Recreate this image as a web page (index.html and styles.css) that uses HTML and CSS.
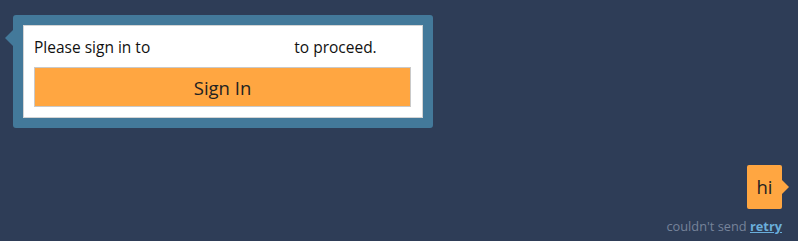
FILE: index.html
```html
<!DOCTYPE html>
<html>
<head>
<meta charset="utf-8">
<link rel="stylesheet" href="styles.css">
</head>
<body>
<div class="page">
  <div class="card">
    <div class="inner">
      <div class="msg">Please sign in to <span class="app"></span> to proceed.</div>
      <button class="signin">Sign In</button>
    </div>
  </div>
  <div class="chat">
    <div class="bubble">hi</div>
    <div class="status">couldn't send <a class="retry" href="#">retry</a></div>
  </div>
</div>
</body>
</html>
```
FILE: styles.css
```css
html, body {
  margin: 0;
  padding: 0;
  background: #2e3d57;
  width: 798px;
  height: 241px;
  overflow: hidden;
  font-family: "Open Sans", "Noto Sans", sans-serif;
}
.page {
  display: flex;
  flex-direction: column;
  padding: 15px 0 0 13px;
}
.card {
  position: relative;
  width: 400px;
  padding: 10px;
  background: #43799a;
  border-radius: 3px;
}
.card::before {
  content: "";
  position: absolute;
  left: -8px;
  top: 15px;
  border-top: 8px solid transparent;
  border-bottom: 8px solid transparent;
  border-right: 8px solid #43799a;
}
.inner {
  background: #fff;
  border: 1px solid #d4d4d4;
  padding: 11px 11px 10px 10px;
  box-sizing: border-box;
  height: 93px;
}
.msg {
  font-size: 15.5px;
  line-height: 20px;
  color: #111;
  white-space: nowrap;
}
.app {
  display: inline-block;
  width: 136px;
}
.signin {
  display: block;
  margin-top: 10px;
  width: 377px;
  height: 40px;
  background: #ffa641;
  border: 1px solid #c9c9c9;
  font-family: inherit;
  font-size: 18.5px;
  color: #222;
  padding: 0;
}
.chat {
  display: flex;
  flex-direction: column;
  align-items: flex-end;
  margin-top: 37px;
  padding-right: 16px;
}
.bubble {
  position: relative;
  width: 35px;
  height: 44px;
  background: #ffa641;
  border-radius: 2px;
  font-size: 18.5px;
  line-height: 44px;
  text-align: center;
  color: #222;
}
.bubble::after {
  content: "";
  position: absolute;
  right: -7px;
  top: 15px;
  border-top: 7px solid transparent;
  border-bottom: 7px solid transparent;
  border-left: 7px solid #ffa641;
}
.status {
  margin-top: 8px;
  font-size: 12.8px;
  line-height: 18px;
  color: #76839a;
}
.retry {
  color: #6aaedb;
  font-weight: bold;
  text-decoration: underline;
}
```
